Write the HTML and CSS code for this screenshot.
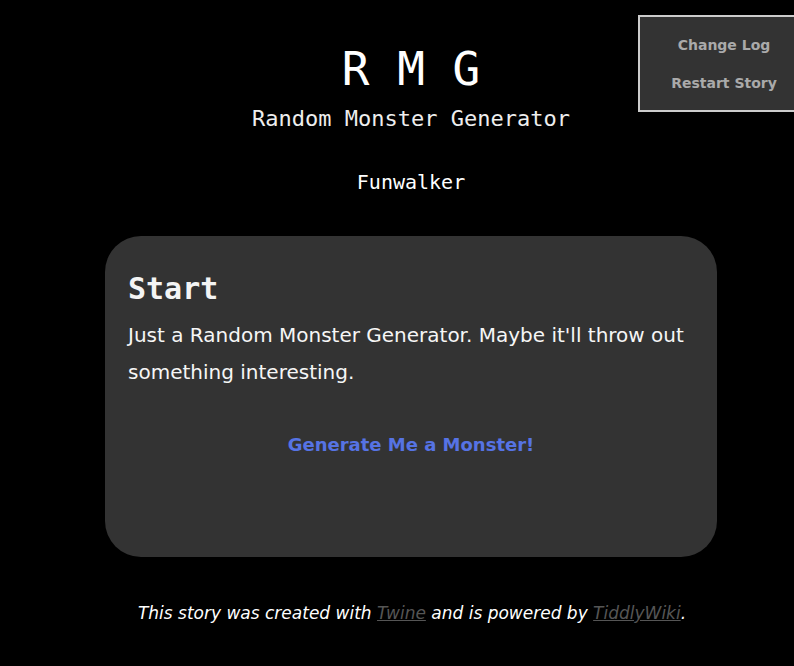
FILE: index.html
```html
<!DOCTYPE html>
<html lang="en">
<head>
    <meta charset="UTF-8">
    <meta name="viewport" content="width=device-width, initial-scale=1.0">
    <title>RMG - Random Monster Generator</title>
    <link rel="stylesheet" href="styles.css">
</head>
<body>
    <nav class="story-menu">
        <a href="#">Change Log</a>
        <a href="#">Restart Story</a>
    </nav>

    <div class="page">
        <header class="story-header">
            <h1 class="story-title">R M G</h1>
            <div class="story-subtitle">Random Monster Generator</div>
            <div class="story-author">Funwalker</div>
        </header>

        <div class="passage">
            <h2 class="passage-title">Start</h2>
            <p class="passage-text">Just a Random Monster Generator. Maybe it'll throw out something interesting.</p>
            <div class="passage-links">
                <a href="#" class="passage-link">Generate Me a Monster!</a>
            </div>
        </div>

        <footer class="story-footer">
            This story was created with <a href="#">Twine</a> and is powered by <a href="#">TiddlyWiki</a>.
        </footer>
    </div>
</body>
</html>
```

FILE: styles.css
```css
body {
    margin: 0;
    padding: 0;
    background-color: #000;
    color: #fff;
    font-family: "DejaVu Sans", Verdana, sans-serif;
}

.page {
    padding-left: 28px;
    display: flex;
    flex-direction: column;
    align-items: center;
}

/* Header */
.story-header {
    text-align: center;
    font-family: "DejaVu Sans Mono", "Lucida Console", monospace;
    padding-top: 42px;
}

.story-title {
    margin: 0;
    font-size: 46px;
    font-weight: normal;
    line-height: 54px;
}

.story-subtitle {
    margin-top: 8px;
    font-size: 22px;
    line-height: 30px;
    color: #eee;
}

.story-author {
    margin-top: 35px;
    font-size: 20px;
    line-height: 26px;
}

/* Passage card */
.passage {
    box-sizing: border-box;
    width: 612px;
    height: 321px;
    margin-top: 41px;
    padding: 34px 23px 28px;
    background-color: #333;
    border-radius: 36px;
}

.passage-title {
    margin: 0;
    font-family: "DejaVu Sans Mono", "Lucida Console", monospace;
    font-size: 30px;
    line-height: 38px;
    color: #f4f4f4;
}

.passage-text {
    margin: 9px 0 0;
    font-size: 20px;
    line-height: 37px;
    color: #f6f6f6;
}

.passage-links {
    margin-top: 43px;
    text-align: center;
}

.passage-link {
    color: #5673e4;
    font-weight: bold;
    font-size: 18px;
    text-decoration: none;
}

/* Footer */
.story-footer {
    margin-top: 46px;
    padding-left: 2px;
    font-size: 17px;
    font-style: italic;
}

.story-footer a {
    color: #555;
    text-decoration: underline;
}

/* Side menu */
.story-menu {
    position: absolute;
    top: 15px;
    right: 0;
    width: 156px;
    height: 97px;
    box-sizing: border-box;
    padding-left: 14px;
    border: 2px solid #ccc;
    border-right: none;
    background-color: #333;
    display: flex;
    flex-direction: column;
    align-items: center;
    justify-content: center;
    gap: 22px;
}

.story-menu a {
    color: #aaa;
    font-size: 14px;
    font-weight: bold;
    text-decoration: none;
}
```
